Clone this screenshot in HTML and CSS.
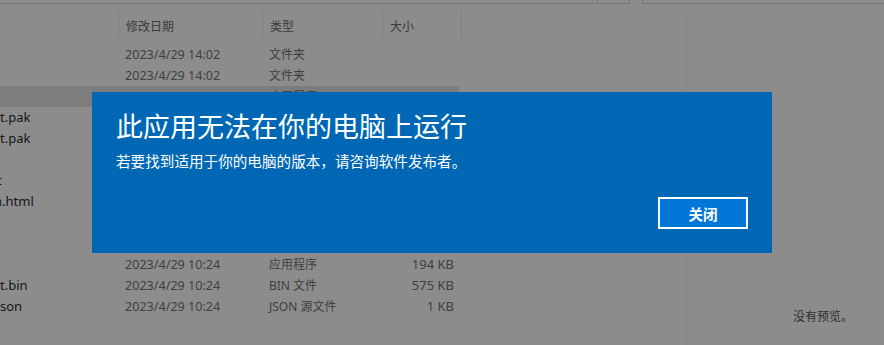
FILE: index.html
```html
<!DOCTYPE html>
<html lang="zh-CN">
<head>
<meta charset="utf-8">
<title>此应用无法在你的电脑上运行</title>
<link rel="stylesheet" href="styles.css">
</head>
<body>
<div class="topbar">
  <div class="tb-address"></div>
  <div class="tb-refresh"></div>
  <div class="tb-search"></div>
</div>
<div class="main">
  <div class="filelist">
    <div class="header">
      <div class="col name"></div>
      <div class="col date">修改日期</div>
      <div class="col type">类型</div>
      <div class="col size">大小</div>
    </div>
    <div class="rows">
      <div class="row"><div class="col name"></div><div class="col date">2023/4/29 14:02</div><div class="col type">文件夹</div><div class="col size"></div></div>
      <div class="row"><div class="col name"></div><div class="col date">2023/4/29 14:02</div><div class="col type">文件夹</div><div class="col size"></div></div>
      <div class="row selected"><div class="col name"></div><div class="col date"></div><div class="col type">应用程序</div><div class="col size"></div></div>
      <div class="row"><div class="col name">t.pak</div><div class="col date"></div><div class="col type"></div><div class="col size"></div></div>
      <div class="row"><div class="col name">t.pak</div><div class="col date"></div><div class="col type"></div><div class="col size"></div></div>
      <div class="row"><div class="col name"></div><div class="col date"></div><div class="col type"></div><div class="col size"></div></div>
      <div class="row"><div class="col name"><span class="cut-t">t</span></div><div class="col date"></div><div class="col type"></div><div class="col size"></div></div>
      <div class="row"><div class="col name"><span class="cut-html">n.html</span></div><div class="col date"></div><div class="col type"></div><div class="col size"></div></div>
      <div class="row"><div class="col name"></div><div class="col date"></div><div class="col type"></div><div class="col size"></div></div>
      <div class="row"><div class="col name"></div><div class="col date"></div><div class="col type"></div><div class="col size"></div></div>
      <div class="row"><div class="col name"></div><div class="col date">2023/4/29 10:24</div><div class="col type">应用程序</div><div class="col size">194 KB</div></div>
      <div class="row"><div class="col name">t.bin</div><div class="col date">2023/4/29 10:24</div><div class="col type">BIN 文件</div><div class="col size">575 KB</div></div>
      <div class="row"><div class="col name">son</div><div class="col date">2023/4/29 10:24</div><div class="col type">JSON 源文件</div><div class="col size">1 KB</div></div>
    </div>
  </div>
  <div class="preview">
    <div class="preview-text">没有预览。</div>
  </div>
</div>

<div class="dialog" role="dialog">
  <div class="dlg-title">此应用无法在你的电脑上运行</div>
  <div class="dlg-text">若要找到适用于你的电脑的版本，请咨询软件发布者。</div>
  <div class="dlg-actions">
    <button class="dlg-btn">关闭</button>
  </div>
</div>
</body>
</html>
```

FILE: styles.css
```css
html, body {
  margin: 0;
  padding: 0;
  height: 100%;
  overflow: hidden;
}
body {
  background: #8c8c8c;
  font-family: "Noto Sans", "Noto Sans CJK SC", sans-serif;
  font-size: 13px;
  color: #3d3d3d;
}

/* top toolbar remnants */
.topbar {
  display: flex;
  height: 4px;
}
.tb-address {
  width: 598px;
  border-bottom: 1px solid #777;
  border-right: 1px solid #777;
  box-sizing: border-box;
}
.tb-refresh {
  width: 32px;
  border-bottom: 1px solid #777;
  border-right: 1px solid #777;
  box-sizing: border-box;
}
.tb-search {
  flex: 1;
  margin-left: 12px;
  border-bottom: 1px solid #777;
  border-left: 1px solid #777;
  box-sizing: border-box;
}

.main {
  display: flex;
  margin-top: 7px;
  height: calc(100% - 11px);
}
.filelist {
  width: 685px;
}
.preview {
  flex: 1;
  border-left: 1px solid #858585;
  padding-top: 296px;
  padding-left: 107px;
}
.preview-text {
  font-family: "Noto Sans CJK SC", sans-serif;
  font-size: 12px;
  line-height: 17px;
  color: #2e2e2e;
}

.header {
  display: flex;
  height: 27px;
  align-items: stretch;
}
.header .col {
  display: flex;
  align-items: center;
  font-family: "Noto Sans CJK SC", sans-serif;
  font-size: 12px;
  color: #3a3a3a;
  padding-top: 1px;
}
.header .col + .col {
  border-left: 1px solid #7f7f7f;
}
.header .size {
  border-right: 1px solid #7f7f7f;
}

.col {
  box-sizing: border-box;
  white-space: nowrap;
  overflow: hidden;
}
.name { width: 118px; }
.date { width: 144px; padding-left: 7px; }
.type { width: 120px; padding-left: 7px; }
.size { width: 80px; padding-left: 7px; }

.rows {
  margin-top: 6px;
}
.row {
  display: flex;
  height: 21px;
  width: 459px;
  align-items: center;
  line-height: 21px;
}
.row.selected {
  background: #7d7d7d;
}
.row .name {
  color: #161616;
  font-size: 13px;
  width: 118px;
}
.row .date {
  color: #3f3f3f;
  font-size: 12.6px;
  padding-left: 7px;
}
.row .type {
  color: #3f3f3f;
  font-size: 12px;
  padding-left: 7px;
}
.row .size {
  color: #3f3f3f;
  font-size: 13px;
  text-align: right;
  padding-right: 5px;
  width: 77px;
}
.cut-t {
  display: inline-block;
  margin-left: -3px;
}
.cut-html {
  display: inline-block;
  margin-left: -6px;
}

/* modal dialog over the explorer */
.dialog {
  position: fixed;
  left: 92px;
  top: 92px;
  width: 680px;
  height: 161px;
  box-sizing: border-box;
  background: #0067b4;
  color: #fff;
  padding: 15px 24px 24px 24px;
  display: flex;
  flex-direction: column;
  font-family: "Noto Sans CJK SC", sans-serif;
}
.dlg-title {
  font-size: 27px;
  line-height: 38px;
  font-weight: 400;
}
.dlg-text {
  font-size: 14.6px;
  line-height: 20px;
  margin-top: 6px;
}
.dlg-actions {
  margin-top: auto;
  display: flex;
  justify-content: flex-end;
}
.dlg-btn {
  width: 90px;
  height: 32px;
  box-sizing: border-box;
  border: 2px solid #fff;
  background: #0076d6;
  color: #fff;
  font-family: "Noto Sans CJK SC", sans-serif;
  font-size: 14.5px;
  font-weight: 700;
  padding: 0;
  margin: 0;
}
```
